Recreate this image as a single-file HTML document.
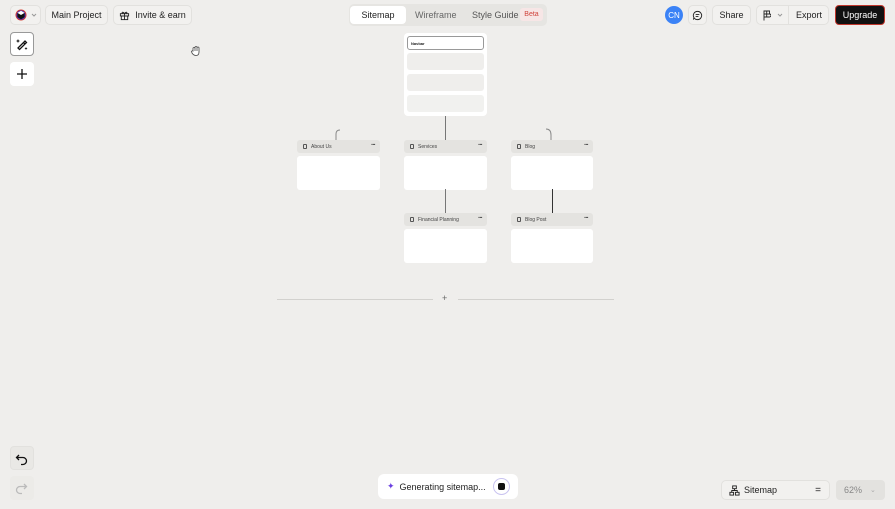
<!DOCTYPE html>
<html><head><meta charset="utf-8"><style>
*{box-sizing:border-box;margin:0;padding:0}
body{width:895px;height:509px;background:#efeeec;font-family:"Liberation Sans",sans-serif;position:relative;overflow:hidden;color:#222}
.a{position:absolute}
.btn{position:absolute;border:1px solid #e2e1de;border-radius:5px;background:#f2f1ef;font-size:9px;display:flex;align-items:center;justify-content:center;color:#222}
.hdr{position:absolute;height:13px;background:#e4e3e0;border-radius:3px;font-size:5px;color:#444;display:flex;align-items:center;padding-left:6px}
.hdr i{display:inline-block;width:4px;height:5px;border:0.8px solid #555;border-radius:1px;margin-right:4px}
.hdr b{position:absolute;right:5px;font-weight:bold;font-size:7px;top:2px;line-height:8px;letter-spacing:-1px}
.body{position:absolute;height:34px;background:#fff;border-radius:3px}
.ln{position:absolute;width:1.3px;background:#777}
</style></head><body>
<div class="btn" style="left:10px;top:5px;width:31px;height:20px;justify-content:flex-start;padding-left:4px">
<svg width="12" height="12" viewBox="0 0 12 12"><circle cx="6" cy="6" r="5.5" fill="#d43a2a"/><circle cx="6" cy="6" r="4.6" fill="#4a33c9"/><path d="M6 1.8L9.6 3.9v4.2L6 10.2 2.4 8.1V3.9z" fill="#111"/><path d="M6 1.8L9.6 3.9 6 6 2.4 3.9z" fill="#fff"/></svg>
<svg width="8" height="8" viewBox="0 0 8 8" style="margin-left:3px"><path d="M2 3l2 2 2-2" stroke="#999" fill="none"/></svg></div>
<div class="btn" style="left:45px;top:5px;width:63px;height:20px">Main Project</div>
<div class="btn" style="left:113px;top:5px;width:79px;height:20px"><svg width="11" height="11" viewBox="0 0 12 12" style="margin-right:5px"><rect x="1.5" y="4" width="9" height="2.5" fill="none" stroke="#222"/><rect x="2.5" y="6.5" width="7" height="4" fill="none" stroke="#222"/><path d="M6 4v6.5M6 4C4 1 2.5 3 4 4M6 4c2-3 3.5-1 2 0" fill="none" stroke="#222"/></svg>Invite &amp; earn</div>
<div class="a" style="left:10px;top:32px;width:24px;height:24px;background:#fff;border:1px solid #999;border-radius:4px"><svg width="22" height="22" viewBox="0 0 22 22"><path d="M7 15l7-7 1.5 1.5-7 7zM12.5 9.5l1.5 1.5" stroke="#111" fill="none" stroke-width="1.3"/><path d="M7 6l.6 1.4L9 8l-1.4.6L7 10l-.6-1.4L5 8l1.4-.6zM15 14l.5 1 1 .5-1 .5-.5 1-.5-1-1-.5 1-.5z" fill="#111"/></svg></div>
<div class="a" style="left:10px;top:62px;width:24px;height:24px;background:#fff;border-radius:4px"><svg width="24" height="24" viewBox="0 0 24 24"><path d="M12 7v10M7 12h10" stroke="#111" stroke-width="1.3"/></svg></div>
<svg class="a" style="left:190px;top:45px" width="12" height="12" viewBox="0 0 12 12"><path d="M3 6V3.5a1 1 0 0 1 2 0V6V2.5a1 1 0 0 1 2 0V6V3a1 1 0 0 1 2 0v4c0 2-1 3.5-3 3.5S3 9.5 2 8L1.5 6.5a1 1 0 0 1 1.5-.5z" fill="#fff" stroke="#444" stroke-width=".8"/></svg>
<div class="a" style="left:349px;top:4px;width:198px;height:22px;background:#e6e5e2;border-radius:5px"></div>
<div class="a" style="left:350px;top:6px;width:56px;height:18px;background:#fff;border-radius:4px;font-size:9px;display:flex;align-items:center;justify-content:center">Sitemap</div>
<div class="a" style="left:415px;top:10px;font-size:9px;color:#666">Wireframe</div>
<div class="a" style="left:472px;top:10px;font-size:9px;color:#555">Style Guide</div>
<div class="a" style="left:520px;top:8px;width:23px;height:13px;background:#f7e6e6;border-radius:3px;font-size:7px;line-height:13px;text-align:center;color:#d0433c">Beta</div>
<div class="a" style="left:665px;top:6px;width:18px;height:18px;border-radius:50%;background:#3b82f6;color:#fff;font-size:8px;display:flex;align-items:center;justify-content:center">CN</div>
<div class="btn" style="left:688px;top:5px;width:19px;height:20px"><svg width="11" height="11" viewBox="0 0 12 12"><path d="M6 1.5a4.5 4.5 0 1 1-3.8 6.9L1.5 10.5l.6-2.2A4.5 4.5 0 0 1 6 1.5z" fill="none" stroke="#222"/><path d="M4 5h4M4 7h3" stroke="#222"/></svg></div>
<div class="btn" style="left:712px;top:5px;width:39px;height:20px">Share</div>
<div class="btn" style="left:756px;top:5px;width:73px;height:20px;justify-content:flex-start"><span style="width:32px;height:18px;border-right:1px solid #e2e1de;display:flex;align-items:center;padding-left:6px"><svg width="8" height="11" viewBox="0 0 8 11"><path d="M1 1h5.5v3H1zM1 4h5.5a1.5 1.5 0 0 1 0 3H1zM1 1v9.5M3.7 1v6" fill="none" stroke="#222" stroke-width=".9"/></svg><svg width="8" height="8" viewBox="0 0 8 8" style="margin-left:5px"><path d="M2 3l2 2 2-2" stroke="#999" fill="none"/></svg></span><span style="margin-left:7px">Export</span></div>
<div class="a" style="left:835px;top:5px;width:50px;height:20px;background:#111;border:1px solid #c0362c;border-radius:4px;color:#fff;font-size:9px;display:flex;align-items:center;justify-content:center">Upgrade</div>

<div class="a" style="left:404px;top:33px;width:83px;height:83px;background:#fff;border-radius:4px"></div>
<div class="a" style="left:407px;top:36px;width:77px;height:14px;border:1px solid #999;border-radius:3px;font-size:4px;font-weight:bold;padding:4px 0 0 3px">Navbar</div>
<div class="a" style="left:407px;top:53px;width:77px;height:17px;background:#efeeec;border-radius:3px"></div>
<div class="a" style="left:407px;top:74px;width:77px;height:17px;background:#efeeec;border-radius:3px"></div>
<div class="a" style="left:407px;top:95px;width:77px;height:17px;background:#f1f1ef;border-radius:3px"></div>
<div class="ln" style="left:444.5px;top:116px;height:24px"></div>
<svg class="a" style="left:330px;top:126px" width="240" height="16"><path d="M6 14V8q0-4 4-4M216 3q5 0 5 6v5" stroke="#888" fill="none"/></svg>

<div class="hdr" style="left:297px;top:140px;width:83px"><i></i>About Us<b>···</b></div>
<div class="body" style="left:297px;top:156px;width:83px"></div>
<div class="hdr" style="left:404px;top:140px;width:83px"><i></i>Services<b>···</b></div>
<div class="body" style="left:404px;top:156px;width:83px"></div>
<div class="hdr" style="left:511px;top:140px;width:82px"><i></i>Blog<b>···</b></div>
<div class="body" style="left:511px;top:156px;width:82px"></div>
<div class="ln" style="left:444.5px;top:189px;height:24px"></div>
<div class="ln" style="left:551.5px;top:189px;height:24px;background:#333"></div>
<div class="hdr" style="left:404px;top:213px;width:83px"><i></i>Financial Planning<b>···</b></div>
<div class="body" style="left:404px;top:229px;width:83px"></div>
<div class="hdr" style="left:511px;top:213px;width:82px"><i></i>Blog Post<b>···</b></div>
<div class="body" style="left:511px;top:229px;width:82px"></div>

<div class="a" style="left:277px;top:299px;width:156px;height:1px;background:#d2d1ce"></div>
<div class="a" style="left:458px;top:299px;width:156px;height:1px;background:#d2d1ce"></div>
<div class="a" style="left:442px;top:293px;font-size:9px;color:#666">+</div>

<div class="a" style="left:10px;top:446px;width:24px;height:24px;background:#e9e8e5;border:1px solid #e2e1de;border-radius:4px"><svg width="22" height="22" viewBox="0 0 22 22"><path d="M8 8l-2.5 2.5L8 13M5.5 10.5H12a3.5 3.5 0 0 1 0 7h-2" stroke="#111" fill="none" stroke-width="1.3"/></svg></div>
<div class="a" style="left:10px;top:476px;width:24px;height:24px;background:#ecebe8;border-radius:4px"><svg width="22" height="22" viewBox="0 0 22 22"><path d="M14 8l2.5 2.5L14 13M16.5 10.5H10a3.5 3.5 0 0 0 0 7h2" stroke="#bbb" fill="none" stroke-width="1.3"/></svg></div>

<div class="a" style="left:378px;top:474px;width:140px;height:25px;background:#fff;border-radius:6px;font-size:9px;display:flex;align-items:center;padding-left:9px"><span style="color:#6a3fe0;margin-right:5px">✦</span>Generating sitemap...
<span style="position:absolute;left:115px;top:4px;width:17px;height:17px;border-radius:50%;border:1px solid #c9c3f0;display:flex;align-items:center;justify-content:center"><span style="width:7px;height:7px;background:#111;border-radius:2px"></span></span></div>
<div class="btn" style="left:721px;top:480px;width:109px;height:20px;justify-content:flex-start;padding-left:7px"><svg width="11" height="11" viewBox="0 0 12 12" style="margin-right:4px"><rect x="4" y="1" width="4" height="3" fill="none" stroke="#222"/><rect x="1" y="8" width="4" height="3" fill="none" stroke="#222"/><rect x="7" y="8" width="4" height="3" fill="none" stroke="#222"/><path d="M6 4v2M3 8V6h6v2" fill="none" stroke="#222"/></svg>Sitemap<span style="position:absolute;right:8px;font-size:10px">=</span></div>
<div class="a" style="left:836px;top:480px;width:49px;height:20px;background:#e3e2df;border-radius:4px;font-size:9px;color:#888;display:flex;align-items:center;padding-left:8px">62%<span style="margin-left:8px;font-size:7px;color:#aaa">⌄</span></div>
</body></html>
